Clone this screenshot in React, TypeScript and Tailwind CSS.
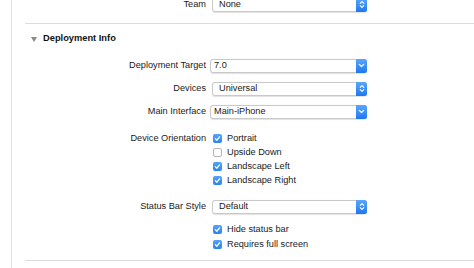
import React from "react";

const font = { fontFamily: '"Liberation Sans", Arial, sans-serif' };

function Combo({ value, kind }: { value: string; kind: "combo" | "popup" }) {
  const isPopup = kind === "popup";
  return (
    <div
      className={`flex h-[14px] items-stretch rounded-[3px] border border-[#c9c9c9] bg-white shadow-[0_0.5px_1px_rgba(0,0,0,0.12)] ${
        isPopup ? "ml-[2px] w-[155px]" : "w-[157px]"
      }`}
    >
      <div className={`flex flex-1 items-center text-[9.2px] leading-none text-[#1a1a1a] ${isPopup ? "pl-[6px]" : "pl-[3px]"}`}>
        {value}
      </div>
      <div className="flex w-[11px] items-center justify-center rounded-r-[2.5px] bg-gradient-to-b from-[#5aa6fb] to-[#1b78ef] -my-px -mr-px">
        {isPopup ? (
          <svg width="6" height="9" viewBox="0 0 6 9" fill="none">
            <path d="M1.2 3.4 L3 1.6 L4.8 3.4" stroke="white" strokeWidth="1.1" strokeLinecap="round" strokeLinejoin="round" />
            <path d="M1.2 5.6 L3 7.4 L4.8 5.6" stroke="white" strokeWidth="1.1" strokeLinecap="round" strokeLinejoin="round" />
          </svg>
        ) : (
          <svg width="7" height="5" viewBox="0 0 7 5" fill="none">
            <path d="M1.3 1.4 L3.5 3.5 L5.7 1.4" stroke="white" strokeWidth="1.2" strokeLinecap="round" strokeLinejoin="round" />
          </svg>
        )}
      </div>
    </div>
  );
}

function Check({ label, checked }: { label: string; checked: boolean }) {
  return (
    <div className="flex items-center">
      {checked ? (
        <div className="ml-[3px] flex h-[9px] w-[9px] items-center justify-center rounded-[2px] bg-gradient-to-b from-[#55a3fa] to-[#2a83f2]">
          <svg width="7" height="7" viewBox="0 0 7 7" fill="none">
            <path d="M1.4 3.7 L2.9 5.2 L5.6 1.8" stroke="white" strokeWidth="1.3" strokeLinecap="round" strokeLinejoin="round" />
          </svg>
        </div>
      ) : (
        <div className="ml-[3px] h-[9px] w-[9px] rounded-[2px] border border-[#b5b5b5] bg-white" />
      )}
      <span className="ml-[5px] text-[9.2px] leading-none text-[#1a1a1a]">{label}</span>
    </div>
  );
}

function Row({ label, children, className = "" }: { label?: string; children: React.ReactNode; className?: string }) {
  return (
    <div className={`flex items-center ${className}`}>
      <div className="w-[194px] text-right text-[9.2px] leading-none text-[#1a1a1a]">{label}</div>
      <div className="ml-[4px] flex items-center">{children}</div>
    </div>
  );
}

export default function App() {
  return (
    <div className="h-[268px] w-[474px] overflow-hidden bg-white pl-[11px]" style={font}>
      <div className="flex h-full flex-col border-l border-[#e2e2e2]">
        <Row label="Team" className="-mt-[3px] h-[15px]">
          <Combo value="None" kind="popup" />
        </Row>
        <div className="ml-[13px] mt-[11px] border-t border-[#dcdcdc]" />
        <div className="mt-[7px] flex h-[16px] items-center">
          <svg className="ml-[19px]" width="6" height="5" viewBox="0 0 6 5">
            <path d="M0 0 H6 L3 5 Z" fill="#8a8a8a" />
          </svg>
          <span className="ml-[6px] text-[9.3px] font-bold leading-none text-[#111]">Deployment Info</span>
        </div>
        <Row label="Deployment Target" className="mt-[11px] h-[15px]">
          <Combo value="7.0" kind="combo" />
        </Row>
        <Row label="Devices" className="mt-[8px] h-[15px]">
          <Combo value="Universal" kind="popup" />
        </Row>
        <Row label="Main Interface" className="mt-[8px] h-[15px]">
          <Combo value="Main-iPhone" kind="combo" />
        </Row>
        <Row label="Device Orientation" className="mt-[13px] h-[14px]">
          <Check label="Portrait" checked />
        </Row>
        <Row className="h-[14px]">
          <Check label="Upside Down" checked={false} />
        </Row>
        <Row className="h-[14px]">
          <Check label="Landscape Left" checked />
        </Row>
        <Row className="h-[14px]">
          <Check label="Landscape Right" checked />
        </Row>
        <Row label="Status Bar Style" className="mt-[11px] h-[15px]">
          <Combo value="Default" kind="popup" />
        </Row>
        <Row className="mt-[8px] h-[15px]">
          <Check label="Hide status bar" checked />
        </Row>
        <Row className="h-[15px]">
          <Check label="Requires full screen" checked />
        </Row>
        <div className="ml-[13px] mt-[8px] border-t border-[#dcdcdc]" />
      </div>
    </div>
  );
}
